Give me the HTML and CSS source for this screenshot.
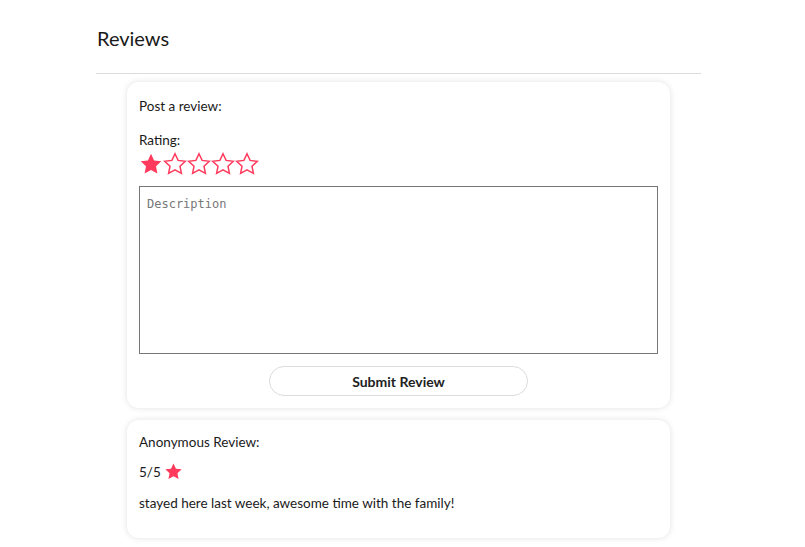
FILE: index.html
```html
<!DOCTYPE html>
<html>
    <head>
        <meta charset='utf-8'>
        <title>Reviews</title>
        <link rel="stylesheet" href="styles.css">
    </head>
    <body>
        <div class='page'>
            <h2 class='title'>Reviews</h2>
            <div class='divider'></div>
            <div class='card post-card'>
                <p class='label'>Post a review:</p>
                <p class='label rating-label'>Rating:</p>
                <div class='stars'>
                    <svg class='star' viewBox='0 0 24 24'><path class='filled' d='M12 1.8l3.1 6.6 7.2.9-5.3 5 1.4 7.1L12 17.9l-6.4 3.5 1.4-7.1-5.3-5 7.2-.9z'/></svg>
                    <svg class='star' viewBox='0 0 24 24'><path class='empty' d='M12 1.8l3.1 6.6 7.2.9-5.3 5 1.4 7.1L12 17.9l-6.4 3.5 1.4-7.1-5.3-5 7.2-.9z'/></svg>
                    <svg class='star' viewBox='0 0 24 24'><path class='empty' d='M12 1.8l3.1 6.6 7.2.9-5.3 5 1.4 7.1L12 17.9l-6.4 3.5 1.4-7.1-5.3-5 7.2-.9z'/></svg>
                    <svg class='star' viewBox='0 0 24 24'><path class='empty' d='M12 1.8l3.1 6.6 7.2.9-5.3 5 1.4 7.1L12 17.9l-6.4 3.5 1.4-7.1-5.3-5 7.2-.9z'/></svg>
                    <svg class='star' viewBox='0 0 24 24'><path class='empty' d='M12 1.8l3.1 6.6 7.2.9-5.3 5 1.4 7.1L12 17.9l-6.4 3.5 1.4-7.1-5.3-5 7.2-.9z'/></svg>
                </div>
                <textarea class='description' placeholder='Description'></textarea>
                <div class='actions'>
                    <button class='submit-btn'>Submit Review</button>
                </div>
            </div>
            <div class='card review-card'>
                <p class='label'>Anonymous Review:</p>
                <p class='score'>5/5 <svg class='star small' viewBox='0 0 24 24'><path class='filled' d='M12 1.8l3.1 6.6 7.2.9-5.3 5 1.4 7.1L12 17.9l-6.4 3.5 1.4-7.1-5.3-5 7.2-.9z'/></svg></p>
                <p class='body-text'>stayed here last week, awesome time with the family!</p>
            </div>
        </div>
    </body>
</html>
```
FILE: styles.css
```css
*{
    box-sizing: border-box;
}
body{
    margin: 0;
    font-family: Lato, "Open Sans", sans-serif;
    color: #1a1a1a;
    background: #fff;
}

.page{
    width: 605px;
    margin-left: 96px;
    padding-top: 25px;
}

.title{
    margin: 0 0 0 1px;
    font-size: 20px;
    font-weight: 400;
    line-height: 26px;
}

.divider{
    height: 1px;
    background: #dcdcdc;
    margin-top: 22px;
    margin-bottom: 8px;
}

.card{
    width: 543px;
    margin: 0 auto 12px;
    background: #fff;
    border-radius: 12px;
    box-shadow: 0 0 6px rgba(0, 0, 0, 0.12);
    padding: 15px 12px 12px;
}

.label, .score, .body-text{
    margin: 0;
    font-size: 13.5px;
    line-height: 18px;
}

.rating-label{
    margin-top: 16px;
}

.stars{
    display: flex;
    margin-top: 3px;
    height: 24px;
}

.star{
    width: 24px;
    height: 24px;
}

.filled{
    fill: #ff3a5c;
}

.empty{
    fill: #fff;
    stroke: #ff3a5c;
    stroke-width: 1.5;
    stroke-linejoin: miter;
}

.description{
    display: block;
    width: 519px;
    height: 168px;
    margin-top: 10px;
    border: 1px solid #767676;
    padding: 10px 7px;
    font-family: "DejaVu Sans Mono", monospace;
    font-size: 12px;
    resize: none;
}

.description::placeholder{
    color: #777;
}

.actions{
    display: flex;
    justify-content: center;
    margin-top: 12px;
}

.submit-btn{
    width: 259px;
    height: 30px;
    border: 1px solid #dcdcdc;
    border-radius: 15px;
    background: #fff;
    font-family: Lato, "Open Sans", sans-serif;
    font-size: 14px;
    font-weight: 700;
    color: #222;
}

.review-card{
    padding-top: 13px;
    padding-bottom: 26px;
}

.score{
    display: flex;
    align-items: center;
    gap: 3px;
    margin-top: 11px;
}

.star.small{
    width: 19px;
    height: 19px;
}

.body-text{
    margin-top: 13px;
}
```
